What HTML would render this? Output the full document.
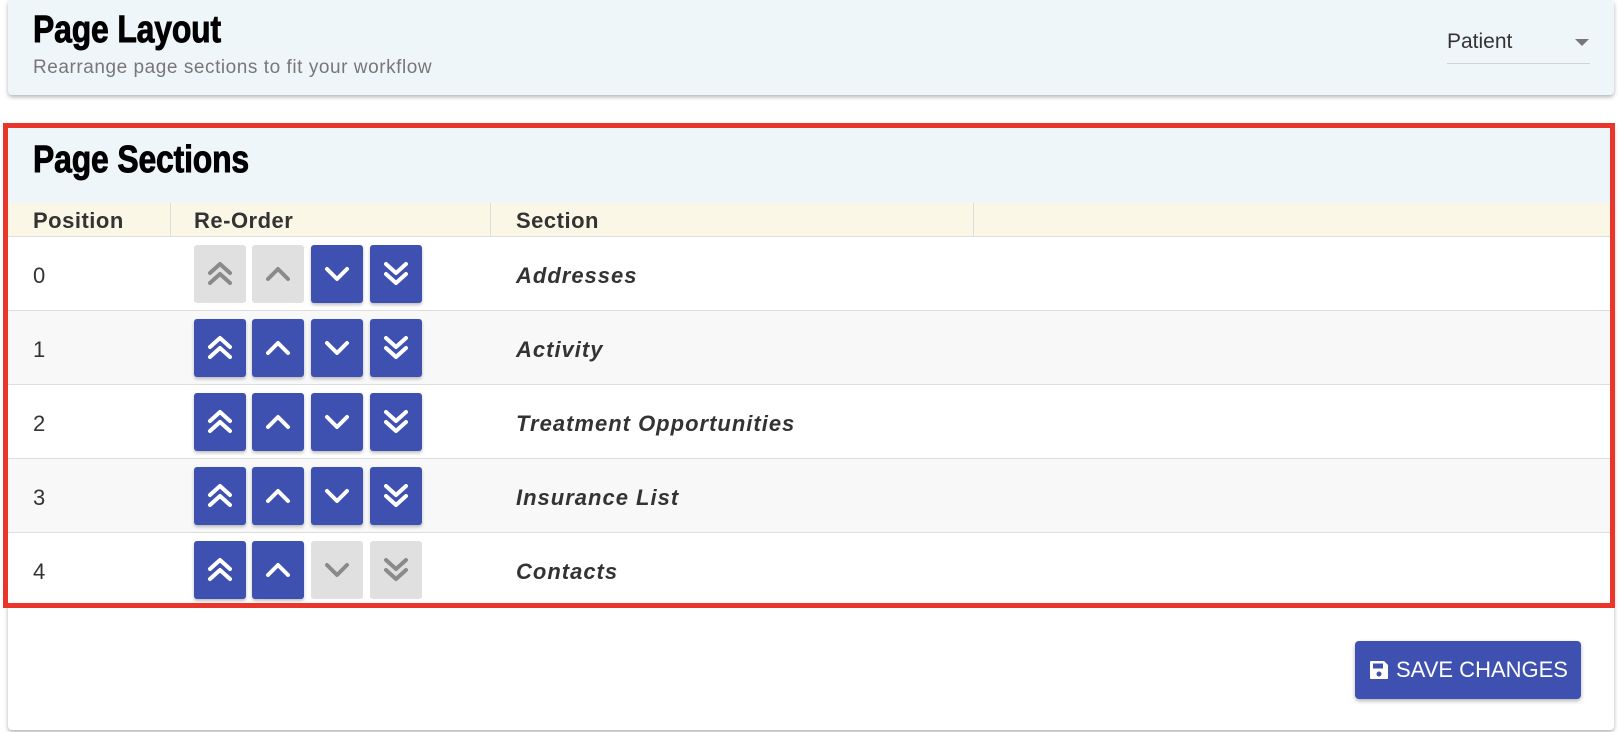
<!DOCTYPE html>
<html><head><meta charset="utf-8"><style>
*{box-sizing:border-box;margin:0;padding:0}
body{width:1618px;height:732px;background:#fff;font-family:"Liberation Sans",Arial,sans-serif;position:relative;overflow:hidden}
.card{position:absolute;left:8px;width:1606px;background:#fff;border-radius:4px;box-shadow:0 2px 4px rgba(0,0,0,.3)}
.hdr{top:0;height:95px;background:#eff6fa}
.h{position:absolute;font-weight:bold;color:#000;font-size:38px;transform:scaleX(.84);transform-origin:left top;white-space:nowrap;letter-spacing:-.2px;-webkit-text-stroke:.9px #000}
.sub{position:absolute;left:25px;top:57px;font-size:19px;color:#777;letter-spacing:.55px}
.sel{position:absolute;left:1439px;top:30px;font-size:21px;color:#333}
.ul{position:absolute;left:1439px;top:63px;width:143px;height:1px;background:#d0d4d8}
.arr{position:absolute;left:1567px;top:39px;width:0;height:0;border-left:7px solid transparent;border-right:7px solid transparent;border-top:7px solid #777}
.main{top:125px;height:605px;border-radius:4px}
.red{position:absolute;left:3px;top:123px;width:1612px;height:485px;border:5px solid #e9352a;z-index:5;pointer-events:none}
.ps{position:absolute;left:8px;top:128px;width:1602px;height:75px;background:#eff6fa}
.th{position:absolute;left:8px;top:203px;width:1602px;height:34px;background:#faf7e6;border-bottom:1px solid #ddd}
.th span{position:absolute;top:5px;font-size:22px;font-weight:bold;color:#333;letter-spacing:.5px}
.vd{position:absolute;top:0;width:1px;height:33px;background:#ddd}
.row{position:absolute;left:8px;width:1602px;height:74px;border-bottom:1px solid #ddd;background:#fff}
.row.a{background:#f8f8f8}
.num{position:absolute;left:25px;top:26px;font-size:22px;color:#333}
.nm{position:absolute;left:508px;top:26px;font-size:22px;font-weight:bold;font-style:italic;color:#333;letter-spacing:1px}
.b{position:absolute;top:8px;width:52px;height:58px;border-radius:3px;background:#3f51b0;box-shadow:0 2px 3px rgba(0,0,0,.25)}
.b.d{background:#e0e0e0;box-shadow:none}
.b svg{position:absolute;left:13px;top:16px}
.save{position:absolute;left:1355px;top:641px;width:226px;height:58px;background:#3f51b0;border-radius:4px;box-shadow:0 2px 4px rgba(0,0,0,.3);color:#fff;font-size:22px;font-weight:500;line-height:58px;padding-left:41px}
.save svg{position:absolute;left:14px;top:19px}
</style></head><body>
<div class="card hdr">
 <div class="h" style="left:25px;top:9px">Page Layout</div>
 <div class="sub">Rearrange page sections to fit your workflow</div>
 <div class="sel">Patient</div><div class="arr"></div><div class="ul"></div>
</div>
<div class="card main"></div>
<div class="ps"><div class="h" style="left:25px;top:11px">Page Sections</div></div>
<div class="th"><span style="left:25px">Position</span><div class="vd" style="left:162px"></div><span style="left:186px">Re-Order</span><div class="vd" style="left:482px"></div><span style="left:508px">Section</span><div class="vd" style="left:965px"></div></div>

<svg width="0" height="0" style="position:absolute"><defs>
<g id="u2"><polyline points="3,12 13,3 23,12" fill="none" stroke-width="4" stroke-linecap="round" stroke-linejoin="round"/><polyline points="3,22 13,13 23,22" fill="none" stroke-width="4" stroke-linecap="round" stroke-linejoin="round"/></g>
<g id="u1"><polyline points="3,18 13,8 23,18" fill="none" stroke-width="4" stroke-linecap="round" stroke-linejoin="round"/></g>
<g id="d1"><polyline points="3,8 13,18 23,8" fill="none" stroke-width="4" stroke-linecap="round" stroke-linejoin="round"/></g>
<g id="d2"><polyline points="3,3 13,12 23,3" fill="none" stroke-width="4" stroke-linecap="round" stroke-linejoin="round"/><polyline points="3,13 13,22 23,13" fill="none" stroke-width="4" stroke-linecap="round" stroke-linejoin="round"/></g>
</defs></svg>

<div class="row" style="top:237px"><div class="num">0</div>
<div class="b d" style="left:186px"><svg width="26" height="26" stroke="#8a8a8a"><use href="#u2"/></svg></div>
<div class="b d" style="left:244px"><svg width="26" height="26" stroke="#8a8a8a"><use href="#u1"/></svg></div>
<div class="b" style="left:303px"><svg width="26" height="26" stroke="#fff"><use href="#d1"/></svg></div>
<div class="b" style="left:362px"><svg width="26" height="26" stroke="#fff"><use href="#d2"/></svg></div>
<div class="nm">Addresses</div></div>

<div class="row a" style="top:311px"><div class="num">1</div>
<div class="b" style="left:186px"><svg width="26" height="26" stroke="#fff"><use href="#u2"/></svg></div>
<div class="b" style="left:244px"><svg width="26" height="26" stroke="#fff"><use href="#u1"/></svg></div>
<div class="b" style="left:303px"><svg width="26" height="26" stroke="#fff"><use href="#d1"/></svg></div>
<div class="b" style="left:362px"><svg width="26" height="26" stroke="#fff"><use href="#d2"/></svg></div>
<div class="nm">Activity</div></div>

<div class="row" style="top:385px"><div class="num">2</div>
<div class="b" style="left:186px"><svg width="26" height="26" stroke="#fff"><use href="#u2"/></svg></div>
<div class="b" style="left:244px"><svg width="26" height="26" stroke="#fff"><use href="#u1"/></svg></div>
<div class="b" style="left:303px"><svg width="26" height="26" stroke="#fff"><use href="#d1"/></svg></div>
<div class="b" style="left:362px"><svg width="26" height="26" stroke="#fff"><use href="#d2"/></svg></div>
<div class="nm">Treatment Opportunities</div></div>

<div class="row a" style="top:459px"><div class="num">3</div>
<div class="b" style="left:186px"><svg width="26" height="26" stroke="#fff"><use href="#u2"/></svg></div>
<div class="b" style="left:244px"><svg width="26" height="26" stroke="#fff"><use href="#u1"/></svg></div>
<div class="b" style="left:303px"><svg width="26" height="26" stroke="#fff"><use href="#d1"/></svg></div>
<div class="b" style="left:362px"><svg width="26" height="26" stroke="#fff"><use href="#d2"/></svg></div>
<div class="nm">Insurance List</div></div>

<div class="row" style="top:533px;border-bottom:none"><div class="num">4</div>
<div class="b" style="left:186px"><svg width="26" height="26" stroke="#fff"><use href="#u2"/></svg></div>
<div class="b" style="left:244px"><svg width="26" height="26" stroke="#fff"><use href="#u1"/></svg></div>
<div class="b d" style="left:303px"><svg width="26" height="26" stroke="#8a8a8a"><use href="#d1"/></svg></div>
<div class="b d" style="left:362px"><svg width="26" height="26" stroke="#8a8a8a"><use href="#d2"/></svg></div>
<div class="nm">Contacts</div></div>

<div class="red"></div>

<div class="save"><svg width="20" height="20" viewBox="0 0 20 20"><path d="M2 1h13l4 4v13a1 1 0 0 1-1 1H2a1 1 0 0 1-1-1V2a1 1 0 0 1 1-1z" fill="#fff"/><rect x="4" y="3.5" width="10" height="5" fill="#3f51b0"/><circle cx="10" cy="14" r="2.5" fill="#3f51b0"/></svg>SAVE CHANGES</div>
</body></html>
